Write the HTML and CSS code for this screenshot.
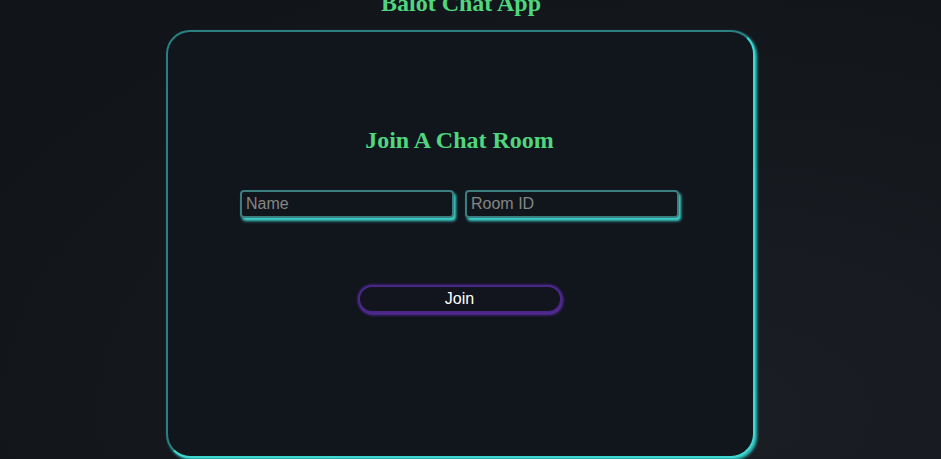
FILE: index.html
```html
<!DOCTYPE html>
<html>
<head>
<meta charset="utf-8">
<link rel="stylesheet" href="styles.css">
</head>
<body>
<div class="page">
  <h1 class="app-title">Balot Chat App</h1>
  <div class="card">
    <h2 class="card-title">Join A Chat Room</h2>
    <div class="fields">
      <input class="field" type="text" placeholder="Name">
      <input class="field" type="text" placeholder="Room ID">
    </div>
    <button class="join-btn">Join</button>
  </div>
</div>
</body>
</html>
```
FILE: styles.css
```css
html, body {
  margin: 0;
  padding: 0;
  height: 100%;
  overflow: hidden;
}
body {
  background: radial-gradient(ellipse at 75% 90%, #1b1f25 0%, #15191e 45%, #101318 100%);
  font-family: "Liberation Sans", Arial, sans-serif;
}
.page {
  width: 922px;
  display: flex;
  flex-direction: column;
  align-items: center;
}
.app-title {
  font-family: "Liberation Serif", "Times New Roman", serif;
  font-weight: bold;
  font-size: 24px;
  line-height: 28px;
  color: #4fd67e;
  margin: -11px 0 0 0;
}
.card {
  box-sizing: border-box;
  width: 589px;
  height: 428px;
  margin-top: 13px;
  margin-left: -1px;
  border: 2px solid #2a7f80;
  border-right-color: #3fd8d0;
  border-bottom-color: #3fd8d0;
  border-radius: 24px;
  background: #11151c;
  box-shadow: 2px 2px 3px #32c6c0;
  display: flex;
  flex-direction: column;
  align-items: center;
  padding-top: 94px;
  padding-right: 2px;
}
.card-title {
  font-family: "Liberation Serif", "Times New Roman", serif;
  font-weight: bold;
  font-size: 24px;
  line-height: 28px;
  color: #4fd67e;
  margin: 0;
}
.fields {
  display: flex;
  gap: 11px;
  margin-top: 36px;
}
.field {
  box-sizing: border-box;
  width: 214px;
  height: 28px;
  border: 2px solid #3b7e80;
  border-radius: 4px;
  background: #11151c;
  box-shadow: 2px 3px 3px #3cd6d0;
  font-family: "Liberation Sans", Arial, sans-serif;
  font-size: 16px;
  padding: 0 4px;
  color: #ddd;
  outline: none;
}
.field::placeholder {
  color: #858585;
}
.join-btn {
  box-sizing: border-box;
  width: 204px;
  height: 28px;
  margin-top: 67px;
  border: 2px solid #4a2787;
  border-radius: 14px;
  background: #12151d;
  box-shadow: 0 0 3px #5b2fa6, 1px 2px 3px #5b2fa6;
  color: #ffffff;
  font-family: "Liberation Sans", Arial, sans-serif;
  font-size: 16px;
  padding: 0;
}
```
